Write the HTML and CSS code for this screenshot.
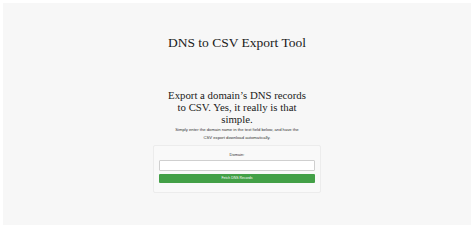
FILE: index.html
```html
<!DOCTYPE html>
<html>
<head>
<meta charset="utf-8">
<link rel="stylesheet" href="styles.css">
</head>
<body>
<div class="page">
  <h1 class="title">DNS to CSV Export Tool</h1>
  <h2 class="lead">Export a domain’s DNS records to CSV. Yes, it really is that simple.</h2>
  <p class="desc">Simply enter the domain name in the text field below, and have the CSV export download automatically.</p>
  <form class="card">
    <label class="label">Domain:</label>
    <input class="field" type="text">
    <button class="btn" type="button">Fetch DNS Records</button>
  </form>
</div>
</body>
</html>
```
FILE: styles.css
```css
html, body { margin: 0; padding: 0; background: #ffffff; }
body { padding: 3px 3px 2px 3px; height: 227px; box-sizing: border-box; }
.page {
  background: #f7f7f7;
  height: 100%;
  display: flex;
  flex-direction: column;
  align-items: center;
  font-family: "Liberation Serif", serif;
  color: #1a1a1a;
}
.title {
  margin: 31px 0 0 0;
  font-size: 13.5px;
  font-weight: normal;
  line-height: 18px;
}
.lead {
  margin: 37px 0 0 0;
  width: 140px;
  text-align: center;
  font-size: 10.8px;
  font-weight: normal;
  line-height: 12px;
}
.desc {
  margin: 1px 0 0 0;
  width: 133px;
  text-align: center;
  font-family: "Liberation Sans", sans-serif;
  font-size: 4.2px;
  line-height: 8px;
  color: #333;
}
.card {
  margin: 3px 0 0 0;
  width: 168px;
  box-sizing: border-box;
  background: #f9f9f9;
  border: 1px solid #ececec;
  border-radius: 2px;
  padding: 5px 5px 9px 5px;
  display: flex;
  flex-direction: column;
  align-items: center;
}
.label {
  font-family: "Liberation Sans", sans-serif;
  font-size: 4px;
  line-height: 7px;
  color: #333;
}
.field {
  margin: 2px 0 0 0;
  width: 100%;
  height: 11px;
  box-sizing: border-box;
  background: #fff;
  border: 1px solid #cfcfcf;
  border-radius: 1px;
  padding: 0;
}
.btn {
  margin: 3px 0 0 0;
  width: 100%;
  height: 9px;
  box-sizing: border-box;
  background: #43a047;
  border: none;
  border-radius: 1px;
  color: #fff;
  font-family: "Liberation Sans", sans-serif;
  font-size: 3.5px;
  line-height: 9px;
  padding: 0;
}
```
